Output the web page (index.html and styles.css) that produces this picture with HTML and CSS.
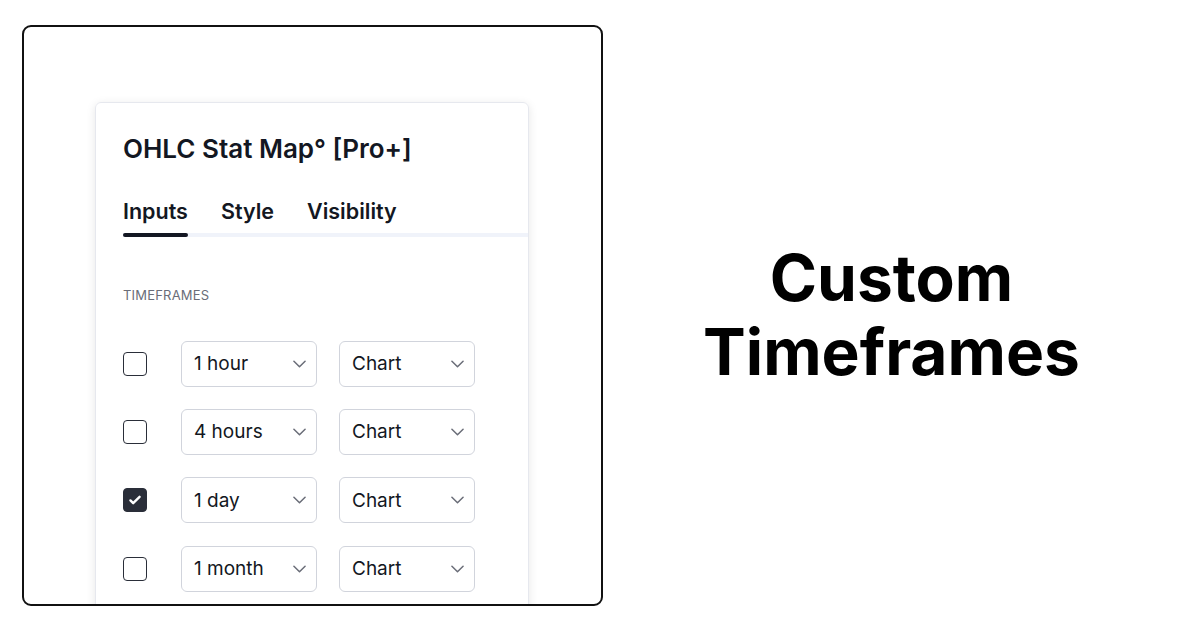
FILE: index.html
```html
<!DOCTYPE html>
<html lang="en">
<head>
    <meta charset="UTF-8">
    <title>Custom Timeframes</title>
    <link rel="stylesheet" href="styles.css">
</head>
<body>
<div class="page">
  <div class="frame">
    <div class="panel">
      <h1 class="panel-title">OHLC Stat Map° [Pro+]</h1>

      <div class="tabs">
        <div class="tab active">Inputs</div>
        <div class="tab">Style</div>
        <div class="tab">Visibility</div>
      </div>

      <div class="group-label">TIMEFRAMES</div>

      <div class="rows">
        <div class="row">
          <span class="check"></span>
          <div class="select">1 hour <svg class="chev" viewBox="0 0 14 8"><path d="M1 1l6 6 6-6"/></svg></div>
          <div class="select">Chart <svg class="chev" viewBox="0 0 14 8"><path d="M1 1l6 6 6-6"/></svg></div>
        </div>
        <div class="row">
          <span class="check"></span>
          <div class="select">4 hours <svg class="chev" viewBox="0 0 14 8"><path d="M1 1l6 6 6-6"/></svg></div>
          <div class="select">Chart <svg class="chev" viewBox="0 0 14 8"><path d="M1 1l6 6 6-6"/></svg></div>
        </div>
        <div class="row">
          <span class="check on"><svg viewBox="0 0 24 24"><path d="M7 12.5l3 3 7-7"/></svg></span>
          <div class="select">1 day <svg class="chev" viewBox="0 0 14 8"><path d="M1 1l6 6 6-6"/></svg></div>
          <div class="select">Chart <svg class="chev" viewBox="0 0 14 8"><path d="M1 1l6 6 6-6"/></svg></div>
        </div>
        <div class="row">
          <span class="check"></span>
          <div class="select">1 month <svg class="chev" viewBox="0 0 14 8"><path d="M1 1l6 6 6-6"/></svg></div>
          <div class="select">Chart <svg class="chev" viewBox="0 0 14 8"><path d="M1 1l6 6 6-6"/></svg></div>
        </div>
      </div>
    </div>
  </div>

  <div class="headline">
    <h2>Custom<br>Timeframes</h2>
  </div>
</div>
</body>
</html>
```

FILE: styles.css
```css
/* page: screenshot frame on the left, caption on the right */
body {
  margin: 0;
  background: #fff;
  font-family: Inter, "Noto Sans", sans-serif;
  color: #131722;
}

.page {
  display: flex;
  align-items: center;
  width: 1200px;
  height: 630px;
}

.frame {
  box-sizing: border-box;
  width: 581px;
  height: 581px;
  margin-left: 22px;
  border: 2px solid #111;
  border-radius: 9px;
  overflow: hidden;
  padding: 75px 0 0 71px;
  background: #fff;
}

/* settings dialog */
.panel {
  width: 434px;
  height: 560px;
  box-sizing: border-box;
  padding: 28px 0 0 27px;
  border: 1px solid #e6e8ee;
  border-radius: 6px;
  box-shadow: 0 2px 10px rgba(0, 0, 0, 0.1);
}

.panel-title {
  margin: 0;
  font-size: 26px;
  line-height: 36px;
  font-weight: 600;
}

.tabs {
  display: flex;
  gap: 33px;
  margin-top: 30px;
  border-bottom: 4px solid #f0f3fa;
}

.tab {
  position: relative;
  font-size: 21.5px;
  line-height: 28px;
  font-weight: 600;
  padding-bottom: 8px;
}

.tab.active::after {
  content: "";
  position: absolute;
  left: 0;
  right: 0;
  bottom: -4px;
  height: 4px;
  border-radius: 2px;
  background: #131722;
}

.group-label {
  margin-top: 50px;
  font-size: 13px;
  line-height: 16px;
  color: #6a6d78;
  letter-spacing: 0.2px;
}

.rows {
  display: flex;
  flex-direction: column;
  gap: 22.4px;
  margin-top: 38px;
}

.row {
  display: flex;
  align-items: center;
}

.check {
  box-sizing: border-box;
  width: 24px;
  height: 24px;
  border: 1.5px solid #2a2e39;
  border-radius: 4px;
  margin-right: 34px;
  display: flex;
}

.check.on {
  background: #2a2e39;
}

.check svg {
  width: 100%;
  height: 100%;
  fill: none;
  stroke: #fff;
  stroke-width: 2.6;
  stroke-linecap: round;
  stroke-linejoin: round;
}

.select {
  box-sizing: border-box;
  width: 136px;
  height: 46px;
  display: flex;
  align-items: center;
  justify-content: space-between;
  padding: 0 10px 0 12px;
  margin-right: 22px;
  border: 1px solid #d1d4dc;
  border-radius: 6px;
  font-size: 19px;
}

.chev {
  width: 13px;
  height: 8px;
  fill: none;
  stroke: #6a6d78;
  stroke-width: 1.6;
  stroke-linecap: round;
  stroke-linejoin: round;
}

/* caption */
.headline {
  flex: 1;
  margin-right: 20px;
  text-align: center;
}

.headline h2 {
  margin: 0;
  font-size: 64px;
  line-height: 74px;
  font-weight: 700;
  color: #000;
}
```
